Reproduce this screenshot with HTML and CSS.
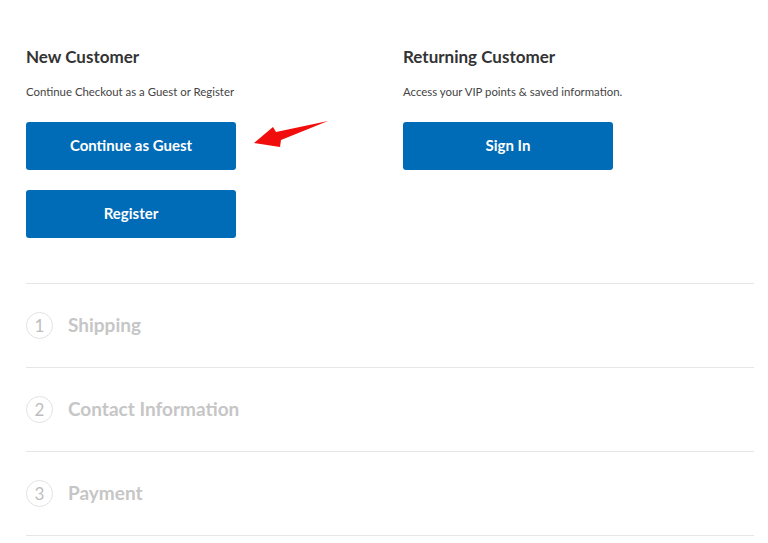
FILE: index.html
```html
<!DOCTYPE html>
<html>
<head>
<meta charset="utf-8">
<link rel="stylesheet" href="styles.css">
</head>
<body>
<div class="page">
  <div class="login">
    <div class="col">
      <h2 class="title">New Customer</h2>
      <p class="desc">Continue Checkout as a Guest or Register</p>
      <div class="btns">
        <button class="btn">Continue as Guest</button>
        <button class="btn">Register</button>
      </div>
    </div>
    <div class="col">
      <h2 class="title">Returning Customer</h2>
      <p class="desc">Access your VIP points &amp; saved information.</p>
      <div class="btns">
        <button class="btn">Sign In</button>
      </div>
    </div>
  </div>
  <div class="steps">
    <div class="step"><span class="num">1</span><span class="label">Shipping</span></div>
    <div class="step"><span class="num">2</span><span class="label">Contact Information</span></div>
    <div class="step"><span class="num">3</span><span class="label">Payment</span></div>
  </div>
  <svg class="arrow" width="90" height="40" viewBox="250 118 90 40">
    <polygon points="254,143 273,127 276,132 328,121 281,140 280,147" fill="#f20d0d"/>
  </svg>
</div>
</body>
</html>
```
FILE: styles.css
```css
html, body { margin: 0; padding: 0; background: #fff; }
body { font-family: Lato, "Open Sans", sans-serif; }
.page { position: relative; padding: 46px 14px 0 26px; width: 728px; }
.login { display: grid; grid-template-columns: 377px 1fr; }
.title { margin: 0; font-size: 17px; line-height: 22px; font-weight: 700; color: #333; }
.desc { margin: 17px 0 0; font-size: 11.4px; line-height: 14px; color: #444; }
.btns { display: flex; flex-direction: column; gap: 20px; margin-top: 23px; }
.btn { width: 210px; height: 48px; border: 0; border-radius: 3px; background: #006bb6; color: #fff; font-family: Lato, sans-serif; font-weight: 700; font-size: 15px; padding: 0 0 3px; }
.steps { margin-top: 45px; border-top: 1px solid #e6e6e6; }
.step { height: 83px; border-bottom: 1px solid #e6e6e6; display: flex; align-items: center; gap: 15px; }
.num { width: 25px; height: 25px; border: 1px solid #e2e2e2; border-radius: 50%; display: flex; align-items: center; justify-content: center; font-size: 17px; color: #bdbdbd; margin-top: -1px; }
.label { font-size: 19px; font-weight: 700; color: #c6c6c6; padding-bottom: 3px; }
.arrow { position: absolute; left: 250px; top: 118px; }
```
